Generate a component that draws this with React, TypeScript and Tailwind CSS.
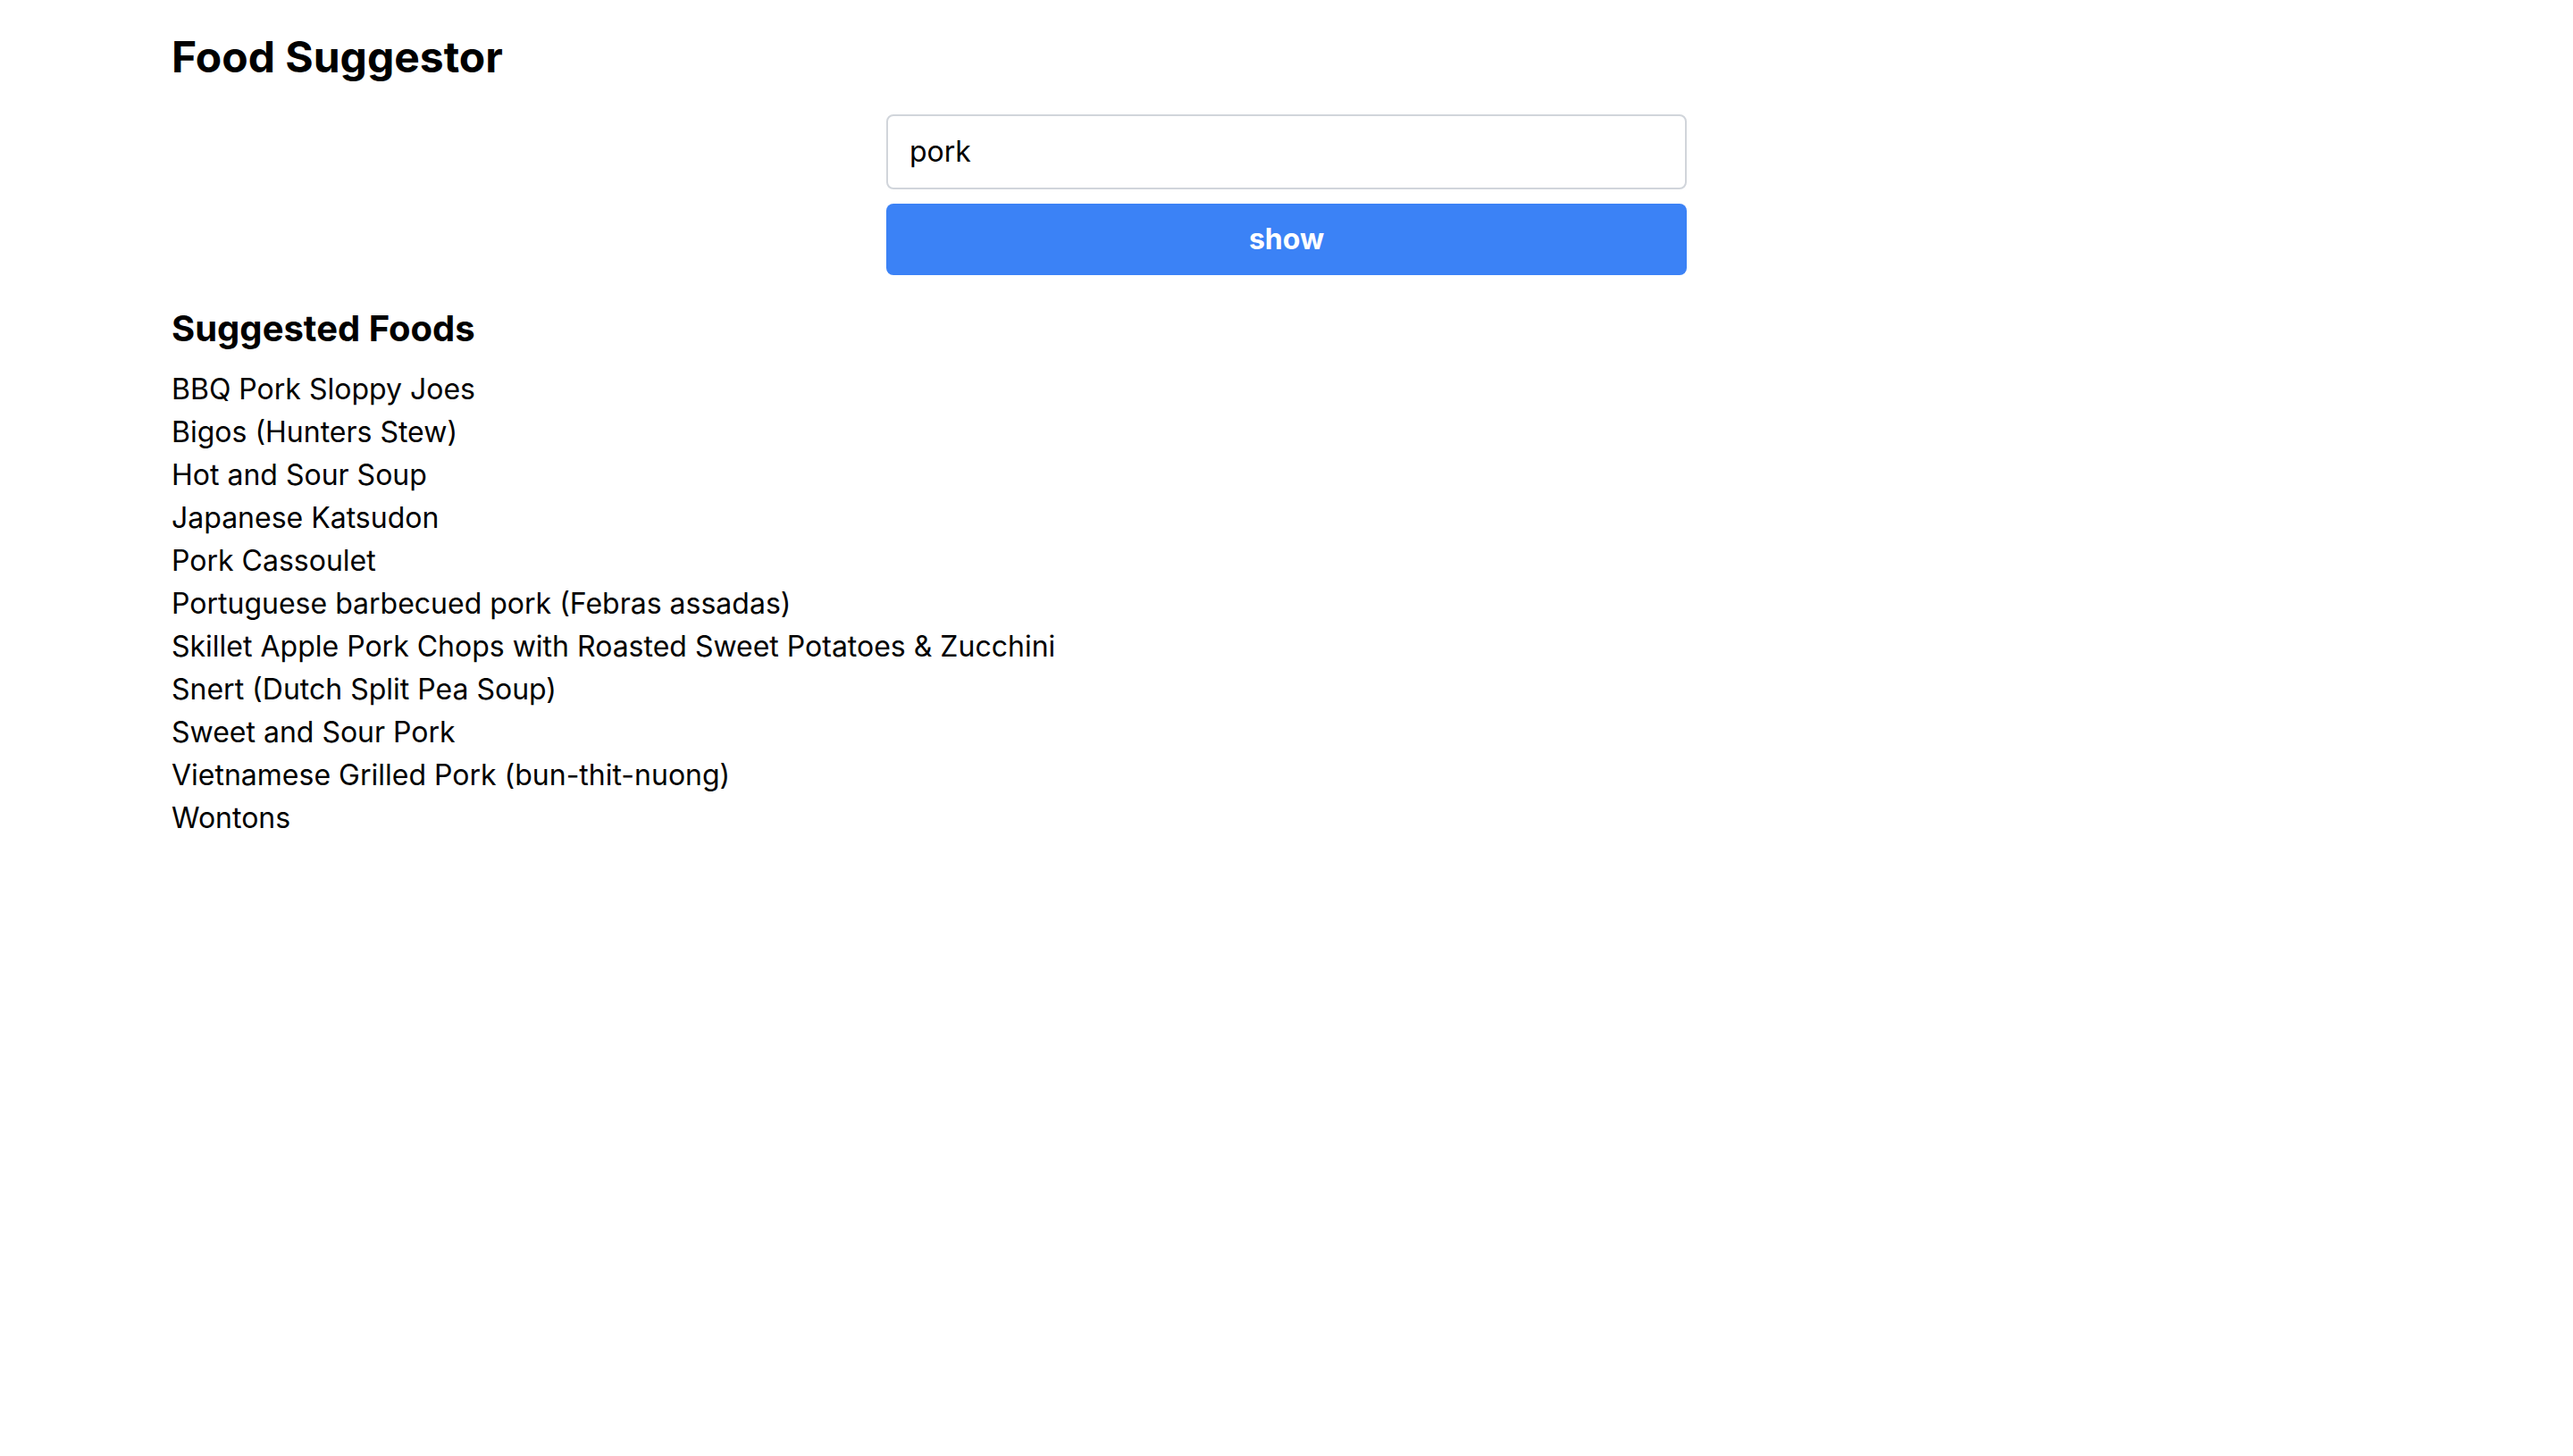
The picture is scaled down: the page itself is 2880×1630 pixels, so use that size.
import React, { useState } from 'react';

const foods = [
  'BBQ Pork Sloppy Joes',
  'Bigos (Hunters Stew)',
  'Hot and Sour Soup',
  'Japanese Katsudon',
  'Pork Cassoulet',
  'Portuguese barbecued pork (Febras assadas)',
  'Skillet Apple Pork Chops with Roasted Sweet Potatoes & Zucchini',
  'Snert (Dutch Split Pea Soup)',
  'Sweet and Sour Pork',
  'Vietnamese Grilled Pork (bun-thit-nuong)',
  'Wontons',
];

export default function App() {
  const [query, setQuery] = useState('pork');

  return (
    <div className="min-h-screen bg-white font-['Inter',sans-serif] text-black">
      <div className="mx-auto w-full max-w-[2560px] px-8 py-8">
        <h1 className="mb-8 text-[48px] font-bold leading-[64px]">Food Suggestor</h1>

        <div className="mx-auto max-w-[896px]">
          <input
            type="text"
            value={query}
            onChange={(e) => setQuery(e.target.value)}
            className="block w-full rounded-lg border-2 border-[#d1d5db] px-6 py-4 text-[32px] leading-[48px] outline-none"
          />
          <button
            type="button"
            className="mt-4 block w-full rounded-lg bg-[#3b82f6] py-4 text-[32px] font-bold leading-[48px] text-white"
          >
            show
          </button>
        </div>

        <h2 className="mt-8 mb-4 text-[40px] font-bold leading-[56px]">Suggested Foods</h2>
        <ul>
          {foods.map((food) => (
            <li key={food} className="text-[32px] leading-[48px]">
              {food}
            </li>
          ))}
        </ul>
      </div>
    </div>
  );
}
